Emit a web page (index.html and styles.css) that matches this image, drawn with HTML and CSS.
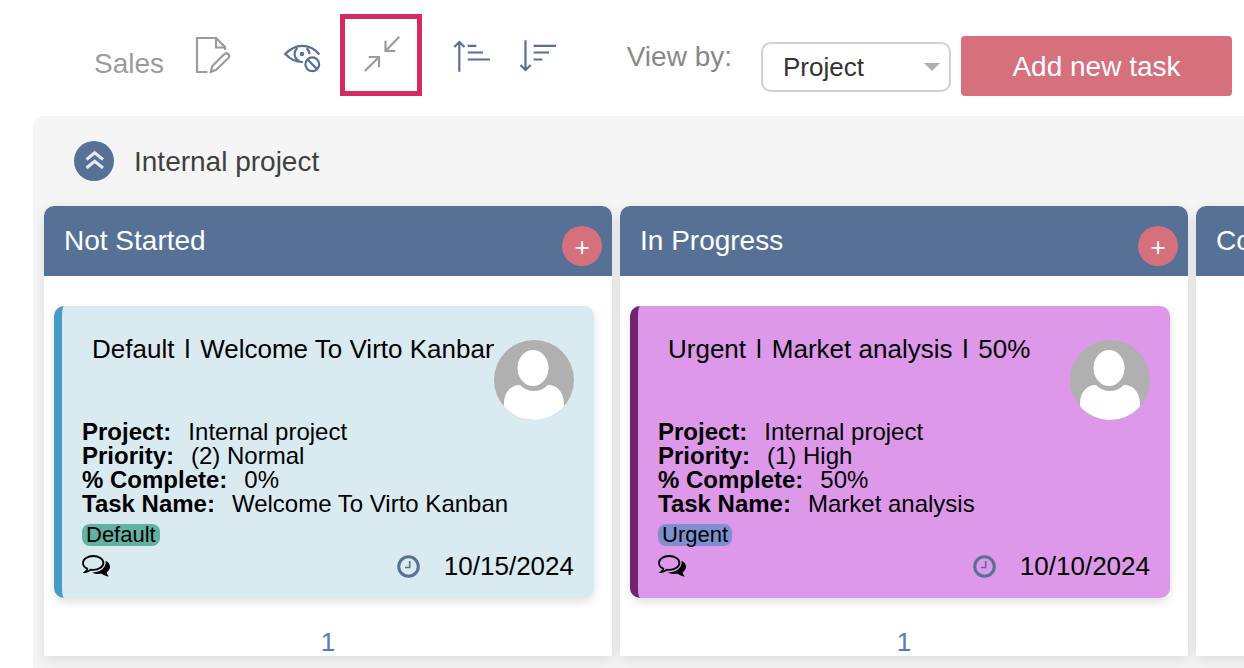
FILE: index.html
```html
<!DOCTYPE html>
<html lang="en">
<head>
    <meta charset="UTF-8">
    <meta name="viewport" content="width=device-width, initial-scale=1.0">
    <title>Sales - Kanban Board</title>
    <link rel="stylesheet" href="styles.css">
</head>
<body>
    <!-- shared drawings -->
    <svg class="sprite" aria-hidden="true">
        <symbol id="avatar" viewBox="0 0 80 80">
            <rect width="80" height="80" fill="#b0b0b0"/>
            <ellipse cx="39" cy="28" rx="15.5" ry="18" fill="#fff"/>
            <path d="M10 80V64C10 52 17 45 26 45C34 53 46 53 54 45C63 45 70 52 70 64V80Z" fill="#fff"/>
        </symbol>
        <symbol id="comments" viewBox="0 0 28 22">
            <path d="M11.2 1C5.6 1 1 4 1 7.9C1 10.3 2.8 12.4 5.3 13.6C5 15 4.3 16.1 3.3 17C5.7 16.8 7.4 16 8.8 14.7C9.6 14.8 10.4 14.9 11.2 14.9C16.8 14.9 21.4 11.8 21.4 7.9C21.4 4 16.8 1 11.2 1Z" fill="none" stroke="#000" stroke-width="1.8"/>
            <path d="M23.6 5.8C26.4 7.2 28 9.3 28 11.8C28 14 26.7 16 24.5 17.4C24.9 18.8 25.8 20 27 21.6C23.8 21.4 21.6 20.2 19.8 18.8C15.8 19.3 12.5 18.6 10 17.4C17.5 17.4 24.6 13.6 23.6 5.8Z"/>
        </symbol>
        <symbol id="clock" viewBox="0 0 23 23">
            <circle cx="11.5" cy="11.5" r="9.8" fill="none" stroke="#577196" stroke-width="3"/>
            <path d="M12.7 6V12.5H8" fill="none" stroke="#577196" stroke-width="1.6"/>
        </symbol>
    </svg>

    <header class="toolbar">
        <h1 class="board-name">Sales</h1>
        <button class="icon-btn edit" aria-label="Edit board">
            <svg viewBox="0 0 42 42"><path d="M15.5 38H5V4H24L33 13V16M24 4V13.5H33"/><path d="M18.8 38L20.3 32L32.2 20.3A2.7 2.7 0 0 1 36.4 24.1L24.2 35.8Z"/></svg>
        </button>
        <button class="icon-btn hide" aria-label="Hide fields">
            <svg viewBox="0 0 42 42"><path d="M22 28C14 28.2 9 25 4.2 20C10 14 15 11.8 21 11.8C28 11.8 34 15 38.4 20.5"/><path d="M18.5 27A7.4 7.4 0 0 1 16.5 14.2M25.5 14.2A7.4 7.4 0 0 1 28.4 20"/><circle class="fill" cx="21" cy="20" r="2.2"/><circle cx="31.3" cy="30.3" r="6.9"/><path d="M26.5 25.5L36.1 35.1"/></svg>
        </button>
        <button class="icon-btn collapse" aria-label="Collapse cards">
            <svg viewBox="0 0 42 42"><path d="M39.3 2.7L25.5 17M25.5 6.7V17H35.3"/><path d="M4.8 37L19 23M8.7 23H19V33.3"/></svg>
        </button>
        <button class="icon-btn sort-asc" aria-label="Sort ascending">
            <svg viewBox="0 0 42 42"><path d="M8.3 37.7V8M3.3 13L8.3 8L13.5 13"/><path d="M16.7 11.8H25.3M16.7 18.5H32M16.7 25.5H39"/></svg>
        </button>
        <button class="icon-btn sort-desc" aria-label="Sort descending">
            <svg viewBox="0 0 42 42"><path d="M8.5 6.3V36M3.5 31L8.5 36L13.7 31"/><path d="M16.7 11.8H39M16.7 18.5H32M16.7 25.5H25.3"/></svg>
        </button>
        <label class="view-label" for="viewBy">View by:</label>
        <div class="controls">
            <div class="select-wrap">
                <select id="viewBy">
                    <option>Project</option>
                    <option>Priority</option>
                </select>
            </div>
            <button class="add-task">Add new task</button>
        </div>
    </header>

    <main class="board">
        <div class="lane-header">
            <button class="lane-toggle" aria-label="Collapse project">
                <svg viewBox="0 0 40 40"><path d="M12.5 18.5L20.7 11.8L29 18.5M12.5 27L20.7 20.3L29 27"/></svg>
            </button>
            <h2>Internal project</h2>
        </div>

        <div class="columns">
            <section class="column">
                <div class="column-header">
                    <h3>Not Started</h3>
                    <button class="add-card" aria-label="Add card">+</button>
                </div>
                <article class="card normal">
                    <div class="card-top">
                        <h4>Default<span class="sep">l</span>Welcome To Virto Kanban</h4>
                        <svg class="avatar"><use href="#avatar"/></svg>
                    </div>
                    <dl>
                        <div><dt>Project:</dt><dd>Internal project</dd></div>
                        <div><dt>Priority:</dt><dd>(2) Normal</dd></div>
                        <div><dt>% Complete:</dt><dd>0%</dd></div>
                        <div><dt>Task Name:</dt><dd>Welcome To Virto Kanban</dd></div>
                    </dl>
                    <span class="tag">Default</span>
                    <div class="card-footer">
                        <svg class="comments"><use href="#comments"/></svg>
                        <svg class="clock"><use href="#clock"/></svg>
                        <time>10/15/2024</time>
                    </div>
                </article>
                <div class="count">1</div>
            </section>

            <section class="column">
                <div class="column-header">
                    <h3>In Progress</h3>
                    <button class="add-card" aria-label="Add card">+</button>
                </div>
                <article class="card urgent">
                    <div class="card-top">
                        <h4>Urgent<span class="sep">l</span>Market analysis<span class="sep">l</span>50%</h4>
                        <svg class="avatar"><use href="#avatar"/></svg>
                    </div>
                    <dl>
                        <div><dt>Project:</dt><dd>Internal project</dd></div>
                        <div><dt>Priority:</dt><dd>(1) High</dd></div>
                        <div><dt>% Complete:</dt><dd>50%</dd></div>
                        <div><dt>Task Name:</dt><dd>Market analysis</dd></div>
                    </dl>
                    <span class="tag">Urgent</span>
                    <div class="card-footer">
                        <svg class="comments"><use href="#comments"/></svg>
                        <svg class="clock"><use href="#clock"/></svg>
                        <time>10/10/2024</time>
                    </div>
                </article>
                <div class="count">1</div>
            </section>

            <section class="column">
                <div class="column-header">
                    <h3>Completed</h3>
                    <button class="add-card" aria-label="Add card">+</button>
                </div>
            </section>
        </div>
    </main>
</body>
</html>
```
FILE: styles.css
```css
* {
    box-sizing: border-box;
}

body {
    margin: 0;
    font-family: Helvetica, "Liberation Sans", Arial, sans-serif;
    color: #000;
    background: #fff;
    overflow: hidden;
}

h1, h2, h3, h4, dl, dd {
    margin: 0;
    font-weight: normal;
}

button, select {
    font-family: inherit;
    border: none;
    padding: 0;
    cursor: pointer;
}

svg {
    display: block;
    flex: none;
}

.sprite {
    display: none;
}

/* toolbar */
.toolbar {
    display: flex;
    align-items: center;
    padding: 14px 12px 20px 94px;
    white-space: nowrap;
}

.board-name {
    padding-top: 18px;
    font-size: 28px;
    line-height: 32px;
    color: #9b9b9b;
}

.icon-btn {
    flex: none;
    width: 42px;
    height: 42px;
    background: none;
}

.icon-btn svg {
    width: 42px;
    height: 42px;
    fill: none;
    stroke: #577196;
    stroke-width: 2.2;
}

.icon-btn .fill {
    fill: #577196;
    stroke: none;
}

.icon-btn.edit {
    margin-left: 28px;
}

.icon-btn.hide {
    margin-left: 47px;
}

.icon-btn.collapse {
    display: flex;
    align-items: center;
    justify-content: center;
    width: 82px;
    height: 82px;
    margin: 0 29px 0 17px;
    border: 5px solid #d52c5f;
}

.icon-btn.edit svg,
.icon-btn.collapse svg {
    stroke: #9b9b9b;
}

.icon-btn.sort-desc {
    margin-left: 24px;
}

.view-label {
    margin-left: auto;
    padding-top: 4px;
    font-size: 28px;
    line-height: 32px;
    color: #888;
}

.controls {
    display: flex;
    align-items: center;
    gap: 10px;
    margin-left: 29px;
    padding-top: 22px;
}

.select-wrap {
    position: relative;
    margin-top: 2px;
}

.select-wrap::after {
    content: "";
    position: absolute;
    top: 21px;
    right: 11px;
    border: 8px solid transparent;
    border-top-color: #b0b0b0;
    border-bottom: none;
    pointer-events: none;
}

.select-wrap select {
    display: block;
    appearance: none;
    width: 190px;
    height: 50px;
    padding: 0 30px 0 20px;
    border: 2px solid #d0d0d0;
    border-radius: 10px;
    background: #fff;
    font-size: 26px;
    color: #333;
}

.add-task {
    width: 271px;
    height: 60px;
    padding-top: 2px;
    border-radius: 4px;
    background: #d6707d;
    color: #fff;
    font-size: 28px;
}

/* board */
.board {
    margin-left: 33px;
    padding: 0 0 40px 11px;
    border-radius: 10px 0 0 0;
    background: #f5f5f5;
    overflow: hidden;
}

.lane-header {
    display: flex;
    align-items: center;
    gap: 20px;
    padding: 25px 30px;
}

.lane-header h2 {
    padding-top: 2px;
    font-size: 28px;
    line-height: 32px;
    color: #404040;
}

.lane-toggle {
    width: 40px;
    height: 40px;
    border-radius: 50%;
    background: #577196;
}

.lane-toggle svg {
    fill: none;
    stroke: #e4e9f0;
    stroke-width: 3;
}

.columns {
    display: flex;
    gap: 8px;
}

.column {
    flex: 0 0 568px;
    min-width: 0;
    border-radius: 10px 10px 0 0;
    background: #fff;
    box-shadow: 0 4px 14px rgba(0, 0, 0, 0.1);
}

.column-header {
    display: flex;
    align-items: flex-start;
    justify-content: space-between;
    padding: 20px 10px 10px 20px;
    border-radius: 10px 10px 0 0;
    background: #577196;
    color: #fff;
}

.column-header h3 {
    font-size: 28px;
    line-height: 30px;
}

.add-card {
    width: 40px;
    height: 40px;
    padding-top: 2px;
    border-radius: 50%;
    background: #d6707d;
    color: #fff;
    font-size: 26px;
    line-height: 38px;
}

.count {
    margin-top: 30px;
    font-size: 26px;
    line-height: 28px;
    text-align: center;
    color: #4f7cc4;
}

/* cards */
.card {
    margin: 30px 18px 0 10px;
    padding: 28px 20px 17px;
    border-left: 8px solid;
    border-radius: 10px;
    box-shadow: 0 4px 10px rgba(0, 0, 0, 0.12);
}

.card.normal {
    background: #daeaf1;
    border-color: #479bc9;
}

.card.urgent {
    background: #dd98e9;
    border-color: #6f256f;
}

.card-top {
    display: flex;
    align-items: flex-start;
}

.card-top h4 {
    flex: 1;
    min-width: 0;
    padding-left: 10px;
    font-size: 26px;
    line-height: 30px;
    white-space: nowrap;
    overflow: hidden;
}

.sep {
    margin: 0 10px;
}

.avatar {
    width: 80px;
    height: 80px;
    margin-top: 6px;
    border-radius: 50%;
}

.card dl {
    font-size: 24px;
    line-height: 24px;
}

.card dl div {
    display: flex;
    gap: 17px;
}

.card dt {
    font-weight: bold;
}

.tag {
    display: block;
    width: fit-content;
    margin-top: 8px;
    padding: 0 4px;
    border-radius: 8px;
    font-size: 22px;
    line-height: 22px;
}

.normal .tag {
    background: #62b2a1;
}

.urgent .tag {
    background: #7d8fcf;
}

.card-footer {
    display: flex;
    align-items: center;
    margin-top: 5px;
    font-size: 26px;
    line-height: 30px;
}

.comments {
    width: 28px;
    height: 22px;
}

.clock {
    width: 23px;
    height: 23px;
    margin: 0 24px 0 auto;
}
```
